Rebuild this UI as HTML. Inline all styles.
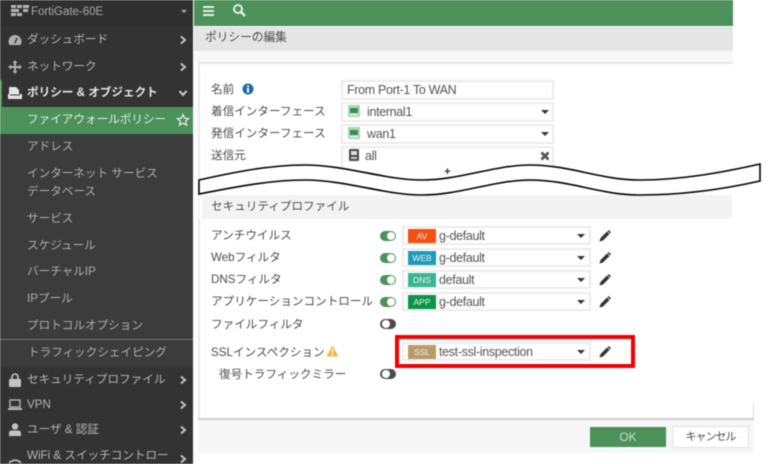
<!DOCTYPE html>
<html><head><meta charset="utf-8"><style>
html,body{margin:0;padding:0;background:#fff}
#r{position:relative;width:768px;height:464px;overflow:hidden;background:#fff;font-family:"Liberation Sans","Noto Sans CJK JP",sans-serif;filter:blur(.5px)}
#r div,#r svg{position:absolute}
.t{white-space:nowrap;line-height:16px;height:16px}
.s{color:#adadad;font-size:11.6px;left:27px;margin-top:1px}
.m{color:#b4b4b4;font-size:11.6px;left:27px;margin-top:1px}
.l{color:#4d4d4d;font-size:11.6px;left:211px}
.sel{background:#fff;border:2px solid #ececec;box-sizing:border-box}
.v{color:#555;font-size:12.5px;letter-spacing:-.33px}
.a{width:0;height:0;border-left:4px solid transparent;border-right:4px solid transparent;border-top:4px solid #333}
.b{left:408px;width:28px;height:14px;color:#fff;font-size:8.5px;text-align:center;line-height:14px;color:#f0f0f0}
.chev{left:178px;width:10px;height:10px}
</style></head><body><div id="r">
<!-- sidebar -->
<div style="left:0;top:0;width:193px;height:464px;background:#333"></div>
<div style="left:0;top:0;width:193px;height:26px;background:#303030"></div>
<div style="left:0;top:80px;width:2px;height:27px;background:#4b9159"></div>
<div style="left:0;top:107px;width:193px;height:27px;background:#4b9159"></div>
<div style="left:0;top:134px;width:193px;height:232px;background:#3c3c3c"></div>
<div style="left:0;top:339px;width:193px;height:1px;background:#777"></div>
<svg style="left:11px;top:4px" width="18" height="14" viewBox="0 0 18 14"><g fill="#b5b5b5"><rect x="0" y="1" width="5" height="3"/><rect x="6" y="1" width="5" height="3"/><rect x="12" y="1" width="6" height="3"/><rect x="0" y="5" width="8" height="3"/><rect x="12" y="5" width="5" height="3"/><rect x="0" y="9" width="5" height="3"/><rect x="6" y="9" width="5" height="3"/></g></svg>
<div class="t" style="left:31px;top:4px;color:#a8a8a8;font-size:11.5px">FortiGate-60E</div>
<div class="a" style="left:181px;top:10px;border-top-color:#aaa;border-left-width:3px;border-right-width:3px;border-top-width:3px"></div>
<svg style="left:8px;top:34px" width="14" height="12" viewBox="0 0 14 12"><path d="M1.500 11A6.500 6.500 0 1 1 12.500 11Z" fill="#b0b0b0"/><path d="M7 9L9 4" stroke="#333" stroke-width="1.500"/></svg>
<div class="t m" style="top:31px">ダッシュボード</div>
<svg class="chev" style="top:35px" viewBox="0 0 10 10"><path d="M3 1.500L7 5L3 8.500" fill="none" stroke="#c0c0c0" stroke-width="2"/></svg>
<svg style="left:8px;top:60px" width="14" height="14" viewBox="0 0 14 14"><path d="M7 0L9.500 3H8V6H11V4.500L14 7L11 9.500V8H8V11H9.500L7 14L4.500 11H6V8H3V9.500L0 7L3 4.500V6H6V3H4.500Z" fill="#b0b0b0"/></svg>
<div class="t m" style="top:58px">ネットワーク</div>
<svg class="chev" style="top:62px" viewBox="0 0 10 10"><path d="M3 1.500L7 5L3 8.500" fill="none" stroke="#c0c0c0" stroke-width="2"/></svg>
<svg style="left:8px;top:87px" width="14" height="13" viewBox="0 0 14 13"><path d="M1 0H8L11 3V7H14V12H0V7H1Z" fill="#e4e4e4"/><path d="M2 8H12" stroke="#333" stroke-width="1"/></svg>
<div class="t" style="left:27px;top:85px;color:#e6e6e6;font-size:11.6px;font-weight:bold;margin-top:0">ポリシー &amp; オブジェクト</div>
<svg class="chev" style="top:88px" viewBox="0 0 10 10"><path d="M1.500 3L5 7L8.500 3" fill="none" stroke="#d0d0d0" stroke-width="2"/></svg>
<div class="t" style="left:27px;top:112px;color:#e0efe3;font-size:11.6px">ファイアウォールポリシー</div>
<svg style="left:176px;top:113px" width="14" height="14" viewBox="0 0 14 14"><path d="M7 1.500L8.600 5.200L12.600 5.600L9.600 8.200L10.500 12.200L7 10.100L3.500 12.200L4.400 8.200L1.400 5.600L5.400 5.200Z" fill="none" stroke="#e8f2ea" stroke-width="1.200"/></svg>
<div class="t s" style="top:138px">アドレス</div>
<div class="t s" style="top:165px">インターネット サービス</div>
<div class="t s" style="top:183px">データベース</div>
<div class="t s" style="top:210px">サービス</div>
<div class="t s" style="top:237px">スケジュール</div>
<div class="t s" style="top:263px">バーチャルIP</div>
<div class="t s" style="top:290px">IPプール</div>
<div class="t s" style="top:317px">プロトコルオプション</div>
<div class="t s" style="top:344px;left:28px">トラフィックシェイピング</div>
<svg style="left:8px;top:373px" width="14" height="14" viewBox="0 0 14 14"><rect x="1" y="6" width="12" height="8" rx="1" fill="#c4c4c4"/><path d="M4 6V4a3 3 0 0 1 6 0V6" fill="none" stroke="#c4c4c4" stroke-width="1.600"/></svg>
<div class="t m" style="top:371px">セキュリティプロファイル</div>
<svg class="chev" style="top:375px" viewBox="0 0 10 10"><path d="M3 1.500L7 5L3 8.500" fill="none" stroke="#c0c0c0" stroke-width="2"/></svg>
<svg style="left:8px;top:399px" width="14" height="12" viewBox="0 0 14 12"><rect x="2" y="1" width="10" height="7" fill="none" stroke="#b8b8b8" stroke-width="1.300"/><rect x="0" y="9" width="14" height="2" fill="#b8b8b8"/></svg>
<div class="t m" style="top:396px">VPN</div>
<svg class="chev" style="top:400px" viewBox="0 0 10 10"><path d="M3 1.500L7 5L3 8.500" fill="none" stroke="#c0c0c0" stroke-width="2"/></svg>
<svg style="left:8px;top:423px" width="14" height="13" viewBox="0 0 14 13"><circle cx="7" cy="3.500" r="3.200" fill="#c4c4c4"/><path d="M1 13V10Q1 7.500 4 7.500H10Q13 7.500 13 10V13Z" fill="#c4c4c4"/></svg>
<div class="t m" style="top:421px">ユーザ &amp; 認証</div>
<svg class="chev" style="top:425px" viewBox="0 0 10 10"><path d="M3 1.500L7 5L3 8.500" fill="none" stroke="#c0c0c0" stroke-width="2"/></svg>
<div class="t m" style="top:447px">WiFi &amp; スイッチコントロー</div>
<svg style="left:8px;top:458px" width="14" height="6" viewBox="0 0 14 6"><path d="M1 5A8 8 0 0 1 13 5" fill="none" stroke="#c0c0c0" stroke-width="1.600"/></svg>
<svg class="chev" style="top:454px" viewBox="0 0 10 10"><path d="M3 1.500L7 5L3 8.500" fill="none" stroke="#c0c0c0" stroke-width="2"/></svg>

<!-- top -->
<div style="left:194px;top:0;width:539px;height:26px;background:#4b9159"></div>
<svg style="left:203px;top:5px" width="12" height="12" viewBox="0 0 12 12"><path d="M0 2H11M0 6H11M0 10H11" stroke="#e4efe6" stroke-width="2"/></svg>
<svg style="left:232px;top:3px" width="15" height="15" viewBox="0 0 15 15"><circle cx="6" cy="6" r="4" fill="none" stroke="#e4efe6" stroke-width="2"/><path d="M9 9L13 13" stroke="#e4efe6" stroke-width="2.400"/></svg>
<div style="left:194px;top:27px;width:539px;height:24px;background:#e5e5e5"></div>
<div class="t" style="left:205px;top:30px;color:#4d4d4d;font-size:11.7px">ポリシーの編集</div>
<div style="left:194px;top:51px;width:539px;height:11px;background:#f8f8f8"></div>

<!-- card -->
<div style="left:198px;top:62px;width:535px;height:2px;background:#e8e8e8"></div>
<div style="left:198px;top:62px;width:2px;height:358px;background:#e8e8e8"></div>
<div class="t l" style="top:82px">名前</div>
<svg style="left:242px;top:83px" width="12" height="12" viewBox="0 0 12 12"><circle cx="6" cy="6" r="5.500" fill="#1f6aa5"/><rect x="5" y="5" width="2" height="4.500" fill="#fff"/><rect x="5" y="2.500" width="2" height="1.700" fill="#fff"/></svg>
<div class="sel" style="left:341px;top:80px;width:213px;height:20px"></div>
<div class="t v" style="left:347px;top:82px">From Port-1 To WAN</div>

<div class="t l" style="top:104px">着信インターフェース</div>
<div class="sel" style="left:341px;top:102px;width:213px;height:20px"></div>
<svg style="left:348px;top:105px" width="12" height="12" viewBox="0 0 12 12"><rect width="12" height="12" fill="#a9d8b4"/><path d="M2 3H10V8H2Z" fill="#3f8a55"/><path d="M2 9.500H10" stroke="#eee" stroke-width="1.500"/></svg>
<div class="t v" style="left:367px;top:104px">internal1</div>
<div class="a" style="left:541px;top:110px"></div>

<div class="t l" style="top:126px">発信インターフェース</div>
<div class="sel" style="left:341px;top:124px;width:213px;height:20px"></div>
<svg style="left:348px;top:127px" width="12" height="12" viewBox="0 0 12 12"><rect width="12" height="12" fill="#a9d8b4"/><path d="M2 3H10V8H2Z" fill="#3f8a55"/><path d="M2 9.500H10" stroke="#eee" stroke-width="1.500"/></svg>
<div class="t v" style="left:367px;top:126px">wan1</div>
<div class="a" style="left:541px;top:132px"></div>

<div class="t l" style="top:148px">送信元</div>
<div class="sel" style="left:341px;top:146px;width:213px;height:36px"></div>
<svg style="left:348px;top:149px" width="12" height="12" viewBox="0 0 12 12"><rect x="1" y="0" width="10" height="12" rx="1" fill="#4a4a4a"/><rect x="3" y="2" width="6" height="4" fill="#ddd"/><rect x="3" y="8" width="6" height="2" fill="#ccc"/></svg>
<div class="t v" style="left:365px;top:148px">all</div>
<svg style="left:540px;top:151px" width="10" height="10" viewBox="0 0 10 10"><path d="M1.500 1.500L8.500 8.500M8.500 1.500L1.500 8.500" stroke="#555" stroke-width="2.800"/></svg>
<div class="t" style="left:443px;top:164px;color:#333;font-size:11px;font-weight:bold;width:9px;text-align:center">+</div>

<!-- section -->
<div style="left:199px;top:195px;width:3px;height:24px;background:#fff"></div>
<div style="left:202px;top:195px;width:530px;height:24px;background:#f3f3f3"></div>
<div class="t" style="left:211px;top:199px;color:#4d4d4d;font-size:11.6px">セキュリティプロファイル</div>

<!-- wave -->
<svg style="left:0;top:0;z-index:3" width="768" height="464" viewBox="0 0 768 464"><path d="M199 180C235 172 270 165 305 165C345 165 385 180 422 180C460 180 495 165 530 165C570 165 600 180 640 180C680 180 720 173 760 164V181C720 190 680 195 640 195C600 195 570 180 530 180C495 180 460 195 422 195C385 195 345 180 305 180C270 180 235 187 199 194Z" fill="#fff" stroke="#000" stroke-width="1.600"/></svg>

<!-- rows -->
<div class="t l" style="top:228px">アンチウイルス</div>
<div class="t l" style="top:250px">Webフィルタ</div>
<div class="t l" style="top:272px">DNSフィルタ</div>
<div class="t l" style="top:294px">アプリケーションコントロール</div>
<div class="t l" style="top:317px">ファイルフィルタ</div>
<div class="t l" style="top:345px">SSLインスペクション</div>
<svg style="left:326px;top:345px" width="13" height="12" viewBox="0 0 13 12"><path d="M6.500 0.500L12.500 11.500H0.500Z" fill="#efb73e"/><rect x="5.800" y="4" width="1.400" height="4" fill="#fff"/><rect x="5.800" y="9" width="1.400" height="1.400" fill="#fff"/></svg>
<div class="t l" style="top:367px;left:219px">復号トラフィックミラー</div>

<div style="left:380px;top:231px;width:16px;height:10px;border-radius:5px;background:#4b9159"></div><div style="left:386.500px;top:232px;width:8px;height:8px;border-radius:50%;background:#fff"></div>
<div style="left:380px;top:253px;width:16px;height:10px;border-radius:5px;background:#4b9159"></div><div style="left:386.500px;top:254px;width:8px;height:8px;border-radius:50%;background:#fff"></div>
<div style="left:380px;top:275px;width:16px;height:10px;border-radius:5px;background:#4b9159"></div><div style="left:386.500px;top:276px;width:8px;height:8px;border-radius:50%;background:#fff"></div>
<div style="left:380px;top:297px;width:16px;height:10px;border-radius:5px;background:#4b9159"></div><div style="left:386.500px;top:298px;width:8px;height:8px;border-radius:50%;background:#fff"></div>
<div style="left:380px;top:319px;width:16px;height:10px;border-radius:5px;background:#4a4a4a"></div><div style="left:381.500px;top:320px;width:8px;height:8px;border-radius:50%;background:#fff"></div>
<div style="left:380px;top:369px;width:16px;height:10px;border-radius:5px;background:#4a4a4a"></div><div style="left:381.500px;top:370px;width:8px;height:8px;border-radius:50%;background:#fff"></div>

<div class="sel" style="left:402px;top:226px;width:189px;height:19px"></div>
<div class="b" style="top:229px;background:#f5500f">AV</div>
<div class="t v" style="left:439px;top:228px">g-default</div>
<div class="a" style="left:577px;top:234px"></div>
<div class="sel" style="left:402px;top:248px;width:189px;height:19px"></div>
<div class="b" style="top:251px;background:#1e9bb8">WEB</div>
<div class="t v" style="left:439px;top:250px">g-default</div>
<div class="a" style="left:577px;top:256px"></div>
<div class="sel" style="left:402px;top:270px;width:189px;height:19px"></div>
<div class="b" style="top:273px;background:#35b78f">DNS</div>
<div class="t v" style="left:439px;top:272px">default</div>
<div class="a" style="left:577px;top:278px"></div>
<div class="sel" style="left:402px;top:292px;width:189px;height:19px"></div>
<div class="b" style="top:295px;background:#0a9447">APP</div>
<div class="t v" style="left:439px;top:294px">g-default</div>
<div class="a" style="left:577px;top:300px"></div>

<div style="left:395px;top:335px;width:240px;height:33px;border:4px solid #f00000;box-sizing:border-box"></div>
<div class="sel" style="left:402px;top:342px;width:189px;height:19px"></div>
<div class="b" style="top:345px;background:#bb9a67">SSL</div>
<div class="t v" style="left:439px;top:344px">test-ssl-inspection</div>
<div class="a" style="left:577px;top:350px"></div>

<svg style="left:599px;top:230px" width="12" height="12" viewBox="0 0 12 12"><path d="M0.500 11.500L1.500 8L8 1.500L10.500 4L4 10.500ZM9 0.500Q9.800 0 10.300 0.500L11.500 1.700Q12 2.200 11.500 3L11 3.500L8.500 1Z" fill="#333"/></svg>
<svg style="left:599px;top:252px" width="12" height="12" viewBox="0 0 12 12"><path d="M0.500 11.500L1.500 8L8 1.500L10.500 4L4 10.500ZM9 0.500Q9.800 0 10.300 0.500L11.500 1.700Q12 2.200 11.500 3L11 3.500L8.500 1Z" fill="#333"/></svg>
<svg style="left:599px;top:274px" width="12" height="12" viewBox="0 0 12 12"><path d="M0.500 11.500L1.500 8L8 1.500L10.500 4L4 10.500ZM9 0.500Q9.800 0 10.300 0.500L11.500 1.700Q12 2.200 11.500 3L11 3.500L8.500 1Z" fill="#333"/></svg>
<svg style="left:599px;top:296px" width="12" height="12" viewBox="0 0 12 12"><path d="M0.500 11.500L1.500 8L8 1.500L10.500 4L4 10.500ZM9 0.500Q9.800 0 10.300 0.500L11.500 1.700Q12 2.200 11.500 3L11 3.500L8.500 1Z" fill="#333"/></svg>
<svg style="left:599px;top:346px" width="12" height="12" viewBox="0 0 12 12"><path d="M0.500 11.500L1.500 8L8 1.500L10.500 4L4 10.500ZM9 0.500Q9.800 0 10.300 0.500L11.500 1.700Q12 2.200 11.500 3L11 3.500L8.500 1Z" fill="#333"/></svg>

<!-- footer -->
<div style="left:753px;top:403px;width:1px;height:15px;background:#ddd"></div>
<div style="left:198px;top:418px;width:556px;height:2px;background:#cfcfcf"></div>
<div style="left:198px;top:420px;width:556px;height:33px;background:#f6f6f6"></div>
<div style="left:590px;top:427px;width:76px;height:20px;background:#4b9159;text-align:center;color:#c5dfcb;font-size:12px;line-height:20px">OK</div>
<div style="left:672px;top:426px;width:77px;height:22px;background:#fff;border:1px solid #e2e2e2;box-sizing:border-box;text-align:center;color:#4d4d4d;font-size:11px;letter-spacing:-1px;line-height:20px">キャンセル</div>
</div></body></html>
